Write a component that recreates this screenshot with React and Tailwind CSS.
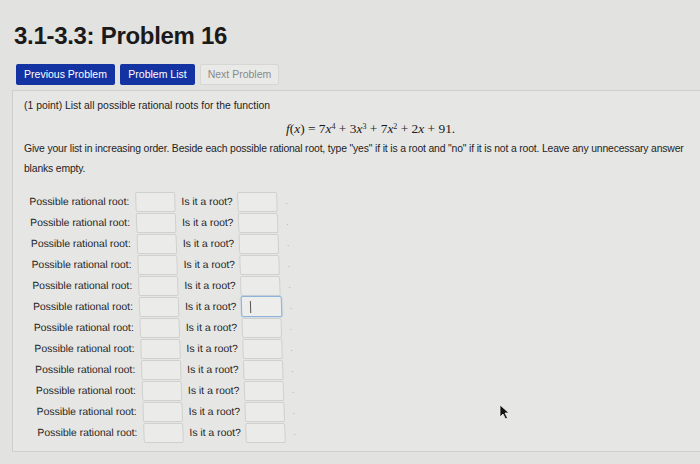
import React from "react";

function Row({ focused }) {
  return (
    <div className="flex items-center h-[21px]">
      <span className="w-[106px] shrink-0">Possible rational root:</span>
      <div className="w-[40px] h-[20px] border border-[#d0d0ce] bg-[#ebebe9] rounded-[2px] shrink-0" />
      <span className="w-[62px] shrink-0 pl-[6px]">Is it a root?</span>
      {focused ? (
        <div className="w-[41px] h-[21px] border border-[#8fb2d8] bg-[#ededeb] rounded-[2px] shrink-0 flex items-center pl-[8px] shadow-[0_0_2px_#a9c6e6]">
          <div className="w-px h-[12px] bg-[#555]" />
        </div>
      ) : (
        <div className="w-[40px] h-[20px] border border-[#d0d0ce] bg-[#ebebe9] rounded-[2px] shrink-0" />
      )}
      <span className="ml-[8px] text-[#999] text-[8px]">.</span>
    </div>
  );
}

export default function App() {
  const rows = Array.from({ length: 12 }, (_, i) => i);
  return (
    <div
      className="relative w-[700px] h-[464px] overflow-hidden bg-[#e2e2e0] text-[#1e1e1e]"
      style={{ fontFamily: '"Liberation Sans", Arial, sans-serif' }}
    >
      <div className="pt-[22px] pl-[14px]">
        <h1 className="text-[24px] font-bold leading-[28px] tracking-[-0.3px] text-[#1a1a1a]">
          3.1-3.3: Problem 16
        </h1>
      </div>
      <div className="flex gap-[5px] pl-[16px] mt-[14px]">
        <div className="h-[21px] w-[99px] bg-[#1433a3] text-white text-[10.5px] font-medium flex items-center justify-center rounded-[2px]">
          Previous Problem
        </div>
        <div className="h-[21px] w-[75px] bg-[#1433a3] text-white text-[10.5px] font-medium flex items-center justify-center rounded-[2px]">
          Problem List
        </div>
        <div className="h-[21px] w-[79px] bg-[#e9e9e7] border border-[#d6d6d4] text-[#8a8a8a] text-[10.5px] flex items-center justify-center rounded-[2px]">
          Next Problem
        </div>
      </div>
      <div className="mt-[5px] ml-[12px] w-[700px] h-[362px] border border-[#cfcfcd] bg-[#e6e6e4] text-[10.4px]">
        <div className="pl-[11px] pt-[8px] leading-[14px]">
          (1 point) List all possible rational roots for the function
        </div>
        <div
          className="pl-[273px] mt-[8px] text-[13.4px] leading-[16px] text-[#1a1a1a]"
          style={{ fontFamily: '"Liberation Serif", "Times New Roman", serif' }}
        >
          <i>f</i>(<i>x</i>) = 7<i>x</i>
          <sup className="text-[8px]">4</sup> + 3<i>x</i>
          <sup className="text-[8px]">3</sup> + 7<i>x</i>
          <sup className="text-[8px]">2</sup> + 2<i>x</i> + 91.
        </div>
        <div className="pl-[11px] mt-[2px] leading-[20px] w-[686px] tracking-[-0.16px]">
          Give your list in increasing order. Beside each possible rational root, type "yes" if it is a root and "no" if it is not a root. Leave any unnecessary answer blanks empty.
        </div>
        <div className="pl-[16px] mt-[12px] origin-top-left skew-x-[2deg]">
          {rows.map((i) => (
            <Row key={i} focused={i === 5} />
          ))}
        </div>
      </div>
      <svg
        className="absolute left-[499px] top-[404px]"
        width="12"
        height="16"
        viewBox="0 0 12 16"
      >
        <path d="M1 1 L1 13 L4 10 L6.5 15 L8.5 14 L6 9 L10 9 Z" fill="#111" stroke="#eee" strokeWidth="0.8" />
      </svg>
    </div>
  );
}
